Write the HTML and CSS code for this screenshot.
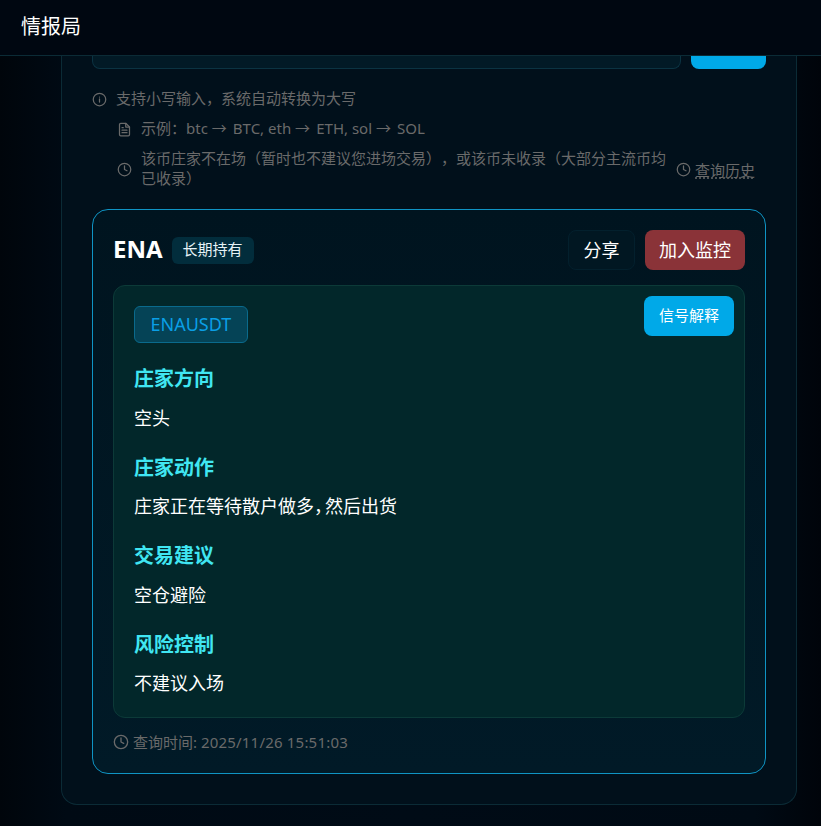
FILE: index.html
```html
<!DOCTYPE html>
<html lang="zh-CN">
<head>
<meta charset="utf-8">
<title>情报局</title>
<link rel="stylesheet" href="styles.css">
</head>
<body>
<header class="topbar"><span class="brand">情报局</span></header>
<main class="page">
  <section class="panel">
    <div class="search-row">
      <div class="search-input"></div>
      <div class="search-btn"></div>
    </div>
    <div class="hint hint-main">
      <svg class="ico ico-15" viewBox="0 0 24 24"><circle cx="12" cy="12" r="10"/><path d="M12 16v-5M12 8h.01"/></svg>
      <span>支持小写输入，系统自动转换为大写</span>
    </div>
    <div class="hint hint-sub">
      <svg class="ico ico-15" viewBox="0 0 24 24"><path d="M14 2H6a2 2 0 0 0-2 2v16a2 2 0 0 0 2 2h12a2 2 0 0 0 2-2V8z"/><path d="M14 2v6h6M8 13h8M8 17h8M8 9h2"/></svg>
      <span>示例：btc <b class="arrow">→</b> BTC, eth <b class="arrow">→</b> ETH, sol <b class="arrow">→</b> SOL</span>
    </div>
    <div class="hint-last">
      <div class="hint hint-sub hint-wrap">
        <svg class="ico ico-15" viewBox="0 0 24 24"><circle cx="12" cy="12" r="10"/><path d="M12 6v6l4 2"/></svg>
        <span>该币庄家不在场（暂时也不建议您进场交易），或该币未收录（大部分主流币均已收录）</span>
      </div>
      <a class="history">
        <svg class="ico ico-15" viewBox="0 0 24 24"><circle cx="12" cy="12" r="10"/><path d="M12 6v6l4 2"/></svg>
        <span class="history-text">查询历史</span>
      </a>
    </div>

    <article class="result">
      <div class="result-head">
        <div class="result-title">
          <span class="coin">ENA</span>
          <span class="tag">长期持有</span>
        </div>
        <div class="actions">
          <button class="btn btn-ghost">分享</button>
          <button class="btn btn-red">加入监控</button>
        </div>
      </div>
      <div class="signal">
        <button class="explain">信号解释</button>
        <span class="pair">ENAUSDT</span>
        <h3 class="sig-title">庄家方向</h3>
        <p class="sig-text">空头</p>
        <h3 class="sig-title">庄家动作</h3>
        <p class="sig-text">庄家正在等待散户做多<span class="tight">，</span>然后出货</p>
        <h3 class="sig-title">交易建议</h3>
        <p class="sig-text">空仓避险</p>
        <h3 class="sig-title">风险控制</h3>
        <p class="sig-text">不建议入场</p>
      </div>
      <div class="time">
        <svg class="ico ico-16" viewBox="0 0 24 24"><circle cx="12" cy="12" r="10"/><path d="M12 6v6l4 2"/></svg>
        <span>查询时间: <span class="stamp">2025/11/26 15:51:03</span></span>
      </div>
    </article>
  </section>
</main>
</body>
</html>
```
FILE: styles.css
```css
* { box-sizing: border-box; }
html, body { margin: 0; height: 826px; overflow: hidden; }
body {
  background: linear-gradient(90deg, #00050b 0%, #000a14 8%, #000b16 50%, #000a14 92%, #00040a 100%);
  color: #fff;
  font-family: "Noto Sans", "Noto Sans CJK SC", sans-serif;
  text-spacing-trim: space-all;
}
.topbar {
  height: 56px;
  padding: 0 21px 2px;
  display: flex;
  align-items: center;
  background: #000711;
  border-bottom: 1px solid #0b2b36;
}
.brand { font-size: 20px; color: #fff; line-height: 1; }
.page { padding: 0 24px 0 61px; }
.panel {
  width: 736px;
  height: 749px;
  padding: 0 30px;
  background: #01101b;
  border: 1px solid #0b2b36;
  border-top: 0;
  border-radius: 0 0 16px 16px;
}
.search-row { display: flex; gap: 10px; height: 13px; }
.search-input {
  width: 589px;
  background: #021a26;
  border: 1px solid #0b3342;
  border-top: 0;
  border-radius: 0 0 8px 8px;
}
.search-btn { width: 75px; background: #00a9e8; border-radius: 0 0 8px 8px; }
.ico { fill: none; stroke: currentColor; stroke-width: 2; stroke-linecap: round; stroke-linejoin: round; flex: none; }
.ico-15 { width: 15px; height: 15px; }
.ico-16 { width: 16px; height: 16px; }
.hint { display: flex; align-items: center; font-size: 15px; line-height: 20px; color: #6a6a6a; }
.hint > span { margin: -1px 0 1px; }
.arrow { font-family: "Noto Sans CJK SC", sans-serif; font-weight: 400; margin-right: 2.2px; }
.hint-main { gap: 9px; margin-top: 20px; }
.hint-sub { gap: 9px; padding-left: 25px; }
.hint-main + .hint-sub { margin-top: 10px; }
.hint-last { display: flex; align-items: center; margin-top: 10px; }
.hint-wrap { width: 575px; flex: none; }
.history { display: flex; align-items: center; gap: 4px; font-size: 15px; color: #6a6a6a; margin-left: 9px; }
.history-text { text-decoration: underline dotted; text-underline-offset: 2px; }
.result {
  width: 674px;
  height: 565px;
  margin-top: 20px;
  padding: 20px;
  background: linear-gradient(180deg, #00141f 0%, #011a27 100%);
  border: 1px solid #0f94c4;
  border-radius: 16px;
  display: flex;
  flex-direction: column;
}
.result-head { display: flex; align-items: center; justify-content: space-between; height: 40px; }
.result-title { display: flex; align-items: center; gap: 9px; }
.coin { font-size: 24px; line-height: 30px; font-weight: 700; color: #fff; margin: -2px 0 0; }
.tag { font-size: 15px; line-height: 25px; padding: 0 11px 2px; background: #022d3c; border-radius: 6px; color: #e6f3f6; }
.actions { display: flex; gap: 10px; }
.btn { font: inherit; font-size: 18px; height: 40px; border-radius: 8px; border: 1px solid transparent; color: #fff; padding: 0 0 2px; }
.btn-ghost { width: 67px; background: #011722; border-color: #03202d; }
.btn-red { width: 100px; background: #8a3338; }
.signal {
  position: relative;
  margin-top: 15px;
  height: 433px;
  padding: 20px;
  background: #02272a;
  border: 1px solid #0c3a38;
  border-radius: 12px;
}
.explain {
  position: absolute;
  top: 10px;
  right: 10px;
  width: 90px;
  height: 40px;
  padding: 0 0 3px;
  font: inherit;
  font-size: 15px;
  color: #fff;
  background: #00a9e8;
  border: 0;
  border-radius: 8px;
}
.pair {
  display: inline-flex;
  align-items: center;
  height: 37px;
  padding: 0 15.5px 2px;
  font-size: 18px;
  color: #0a9fe6;
  background: #054356;
  border: 1px solid #0a6a8c;
  border-radius: 6px;
  margin-bottom: 21px;
}
.sig-title { margin: 0; font-size: 20px; line-height: 30px; font-weight: 700; color: #40e6f2; }
.sig-text { margin: 8.75px 0 19.25px; font-size: 18px; line-height: 30.5px; color: #fff; }
.tight { letter-spacing: -7px; }
.time { display: flex; align-items: center; gap: 4px; margin-top: 14px; font-size: 15px; line-height: 20px; color: #6a6a6a; }
.stamp { letter-spacing: 0.2px; }
```
